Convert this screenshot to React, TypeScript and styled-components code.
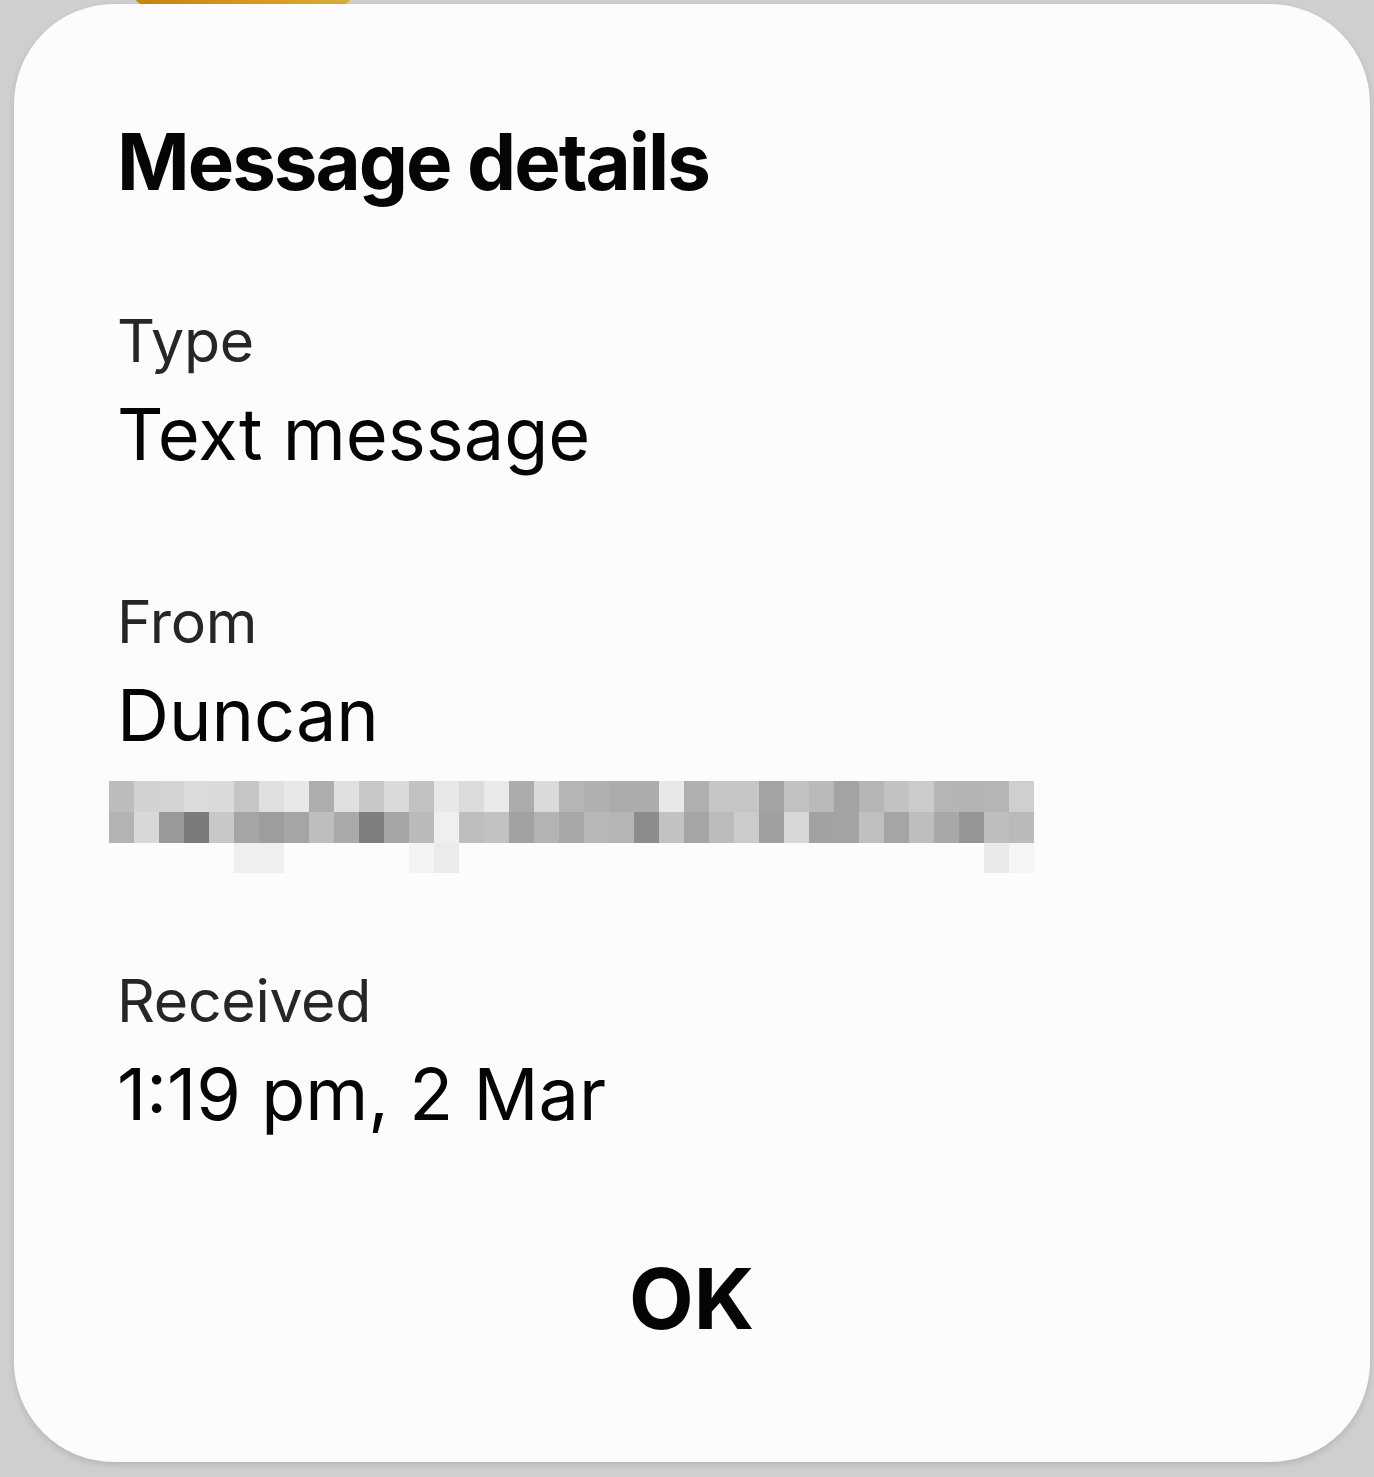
import React from "react";
import styled, { createGlobalStyle } from "styled-components";

const GlobalStyle = createGlobalStyle`
  html, body {
    margin: 0;
    padding: 0;
    background-color: #cfcfd1;
  }

  body {
    font-family: Inter, "Noto Sans", sans-serif;
    -webkit-font-smoothing: antialiased;
  }
`;

// pixelated phone number under the sender name, one string of greys per row
const BLUR_ROWS: string[][] = [
  [
    "bcbcbe", "d2d2d4", "d3d3d5", "dcdcde", "dadadc", "c5c5c7", "e0e0e2", "e8e8ea",
    "adadad", "e0e0e2", "c8c8c8", "dadadc", "c2c2c2", "e8e8ea", "dcdcde", "eaeaec",
    "abacae", "dadadc", "b5b5b5", "b0b0b2", "acacac", "acacae", "e8e8ea", "afafb1",
    "c5c5c7", "c5c5c5", "a3a3a3", "c2c2c2", "bababc", "a3a3a3", "b5b5b5", "c2c2c4",
    "cbcbcd", "b5b5b7", "b3b3b3", "b5b5b5", "cfcfd1",
  ],
  [
    "b3b3b3", "d8d8da", "999999", "7b7b7b", "c8c8ca", "a5a5a7", "9d9d9d", "a5a5a5",
    "bebec0", "aaaaaa", "7f7f7f", "a5a5a5", "bababc", "efefef", "bebebe", "c2c2c2",
    "a2a2a2", "b3b3b5", "a8a8a8", "b8b8ba", "b5b5b5", "8c8c8e", "c2c2c2", "a5a5a5",
    "bbbbbd", "cbcbcb", "9f9f9f", "d8d8da", "a2a2a2", "a3a3a3", "c0c0c0", "a5a5a7",
    "bebec0", "a8a8a8", "959595", "bebec0", "bababa",
  ],
  [
    "fcfcfe", "fcfcfe", "fcfcfe", "fcfcfe", "fcfcfe", "efefef", "efeff1", "fcfcfe",
    "fcfcfe", "fcfcfe", "fcfcfe", "fcfcfe", "f4f4f6", "ebebed", "fcfcfe", "fcfcfe",
    "fcfcfe", "fcfcfe", "fcfcfe", "fcfcfe", "fcfcfe", "fcfcfe", "fcfcfe", "fcfcfe",
    "fcfcfe", "fcfcfe", "fcfcfe", "fcfcfe", "fcfcfe", "fcfcfe", "fcfcfe", "fcfcfe",
    "fcfcfe", "fcfcfe", "fcfcfe", "eaeaec", "f5f5f7",
  ],
];

type Detail = {
  label: string;
  value: string;
  blurred?: boolean;
};

const DETAILS: Detail[] = [
  { label: "Type", value: "Text message" },
  { label: "From", value: "Duncan", blurred: true },
  { label: "Received", value: "1:19 pm, 2 Mar" },
];

function App() {
  return (
    <>
      <GlobalStyle />
      <Screen>
        <Backdrop.Emoji />
        <Dialog.Card>
          <Dialog.Title>Message details</Dialog.Title>
          <Dialog.List>
            {DETAILS.map((d) => (
              <Field.Block key={d.label}>
                <Field.Label>{d.label}</Field.Label>
                <Field.Value>{d.value}</Field.Value>
                {d.blurred && (
                  <Blur.Grid>
                    {BLUR_ROWS.map((row, r) =>
                      row.map((c, i) => <Blur.Cell key={`${r}-${i}`} $c={`#${c}`} />)
                    )}
                  </Blur.Grid>
                )}
              </Field.Block>
            ))}
          </Dialog.List>
          <Dialog.Actions>
            <Dialog.Button type="button">OK</Dialog.Button>
          </Dialog.Actions>
        </Dialog.Card>
      </Screen>
    </>
  );
}

const Screen = styled.div`
  position: relative;
  width: 1374px;
  height: 1477px;
  padding: 4px 4px 0 14px;
  box-sizing: border-box;
  overflow: hidden;
`;

const Backdrop = {
  Emoji: styled.div`
    position: absolute;
    top: -30px;
    left: 128px;

    width: 230px;
    height: 40px;

    border-radius: 0 0 30px 30px;
    background: linear-gradient(90deg, #c9820f 0%, #d99a1c 55%, #d6b13c 100%);
  `,
};

const Dialog = {
  Card: styled.div`
    position: relative;
    width: 1356px;
    height: 1458px;

    display: flex;
    flex-direction: column;
    padding: 111px 104px 0 103px;
    box-sizing: border-box;

    background-color: #fcfcfe;
    border-radius: 100px;
    box-shadow: 0 3px 6px rgba(0, 0, 0, 0.12);
  `,
  Title: styled.h1`
    margin: 0;

    font-size: 78px;
    font-weight: 700;
    line-height: 94px;
    letter-spacing: -2px;
    color: #050505;
  `,
  List: styled.div`
    display: flex;
    flex-direction: column;
    gap: 109px;
    margin-top: 96px;
  `,
  Actions: styled.div`
    display: flex;
    justify-content: center;
    margin-top: 111px;
  `,
  Button: styled.button`
    padding: 0;
    border: none;
    background: none;

    font-family: Inter, "Noto Sans", sans-serif;
    font-size: 84px;
    font-weight: 700;
    line-height: 101px;
    color: #050505;
  `,
};

const Field = {
  Block: styled.div`
    display: flex;
    flex-direction: column;
  `,
  Label: styled.div`
    font-size: 59px;
    line-height: 71px;
    letter-spacing: -0.3px;
    color: #262626;
  `,
  Value: styled.div`
    margin-top: 15px;

    font-size: 72px;
    line-height: 86px;
    color: #050505;
  `,
};

const Blur = {
  Grid: styled.div`
    display: grid;
    grid-template-columns: repeat(37, 25px);
    grid-template-rows: 31px 31px 30px;
    margin: 23px 0 -17px -8px;
  `,
  Cell: styled.div<{ $c: string }>`
    background-color: ${(p) => p.$c};
  `,
};

export default App;
